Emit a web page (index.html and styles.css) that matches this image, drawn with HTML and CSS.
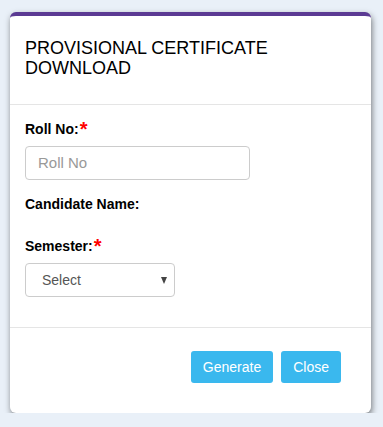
FILE: index.html
```html
<!DOCTYPE html>
<html lang="en">
<head>
    <meta charset="UTF-8">
    <meta name="viewport" content="width=device-width, initial-scale=1.0">
    <title>Provisional Certificate Download</title>
    <link rel="stylesheet" href="styles.css">
</head>
<body>
    <div class="page">
        <div class="modal">
            <div class="modal-header">
                <h4>PROVISIONAL CERTIFICATE DOWNLOAD</h4>
            </div>
            <div class="modal-body">
                <div class="form-group">
                    <label>Roll No:<span class="req">*</span></label>
                    <input type="text" class="roll-input" placeholder="Roll No">
                </div>
                <div class="form-group">
                    <label>Candidate Name:</label>
                </div>
                <div class="form-group last">
                    <label>Semester:<span class="req">*</span></label>
                    <div class="select-wrap">
                        <select>
                            <option>Select</option>
                        </select>
                        <span class="caret"></span>
                    </div>
                </div>
            </div>
            <div class="modal-footer">
                <button class="btn">Generate</button>
                <button class="btn">Close</button>
            </div>
        </div>
    </div>
</body>
</html>
```

FILE: styles.css
```css
* {
    margin: 0;
    padding: 0;
    box-sizing: border-box;
    font-family: Arial, "Liberation Sans", sans-serif;
}
body {
    background: #e9f0f8;
    color: #000;
}
.page {
    padding: 12px 12px 0 10px;
}
.modal {
    width: 361px;
    background: #fff;
    border-top: 4px solid #5b3a93;
    border-radius: 6px;
    box-shadow: 1px 3px 6px rgba(0,0,0,0.5);
}
.modal-header {
    padding: 23px 15px 25px;
    border-bottom: 1px solid #e5e5e5;
}
.modal-header h4 {
    font-size: 18px;
    font-weight: normal;
    line-height: 19.8px;
    width: 280px;
}
.modal-body {
    padding: 14px 15px 15px;
    border-bottom: 1px solid #e5e5e5;
}
.form-group {
    margin-bottom: 14px;
}
.form-group + .form-group.last {
    margin-top: 22px;
}
.form-group.last {
    margin-bottom: 15px;
}
label {
    display: block;
    font-size: 14px;
    font-weight: bold;
    line-height: 20px;
    margin-bottom: 7px;
}
.req {
    color: #f00;
    font-size: 20px;
    position: relative;
    top: 2px;
    margin-left: 1px;
    line-height: 0;
}
.roll-input {
    width: 225px;
    height: 34px;
    padding: 6px 12px;
    font-size: 15px;
    border: 1px solid #ccc;
    border-radius: 4px;
    color: #555;
}
.roll-input::placeholder {
    color: #999;
}
.select-wrap {
    position: relative;
    width: 150px;
}
select {
    width: 150px;
    height: 34px;
    padding: 6px 16px;
    font-size: 14px;
    color: #555;
    background: #fff;
    border: 1px solid #ccc;
    border-radius: 4px;
    appearance: none;
    -webkit-appearance: none;
}
.caret {
    position: absolute;
    right: 8px;
    top: 14px;
    border-left: 3.5px solid transparent;
    border-right: 3.5px solid transparent;
    border-top: 7px solid #444;
}
.modal-footer {
    display: flex;
    justify-content: flex-end;
    gap: 8px;
    padding: 23px 30px 30px;
}
.btn {
    background: #3ab8ee;
    color: #fff;
    font-size: 14px;
    height: 32px;
    padding: 0 12px;
    border: none;
    border-radius: 3px;
}
```
